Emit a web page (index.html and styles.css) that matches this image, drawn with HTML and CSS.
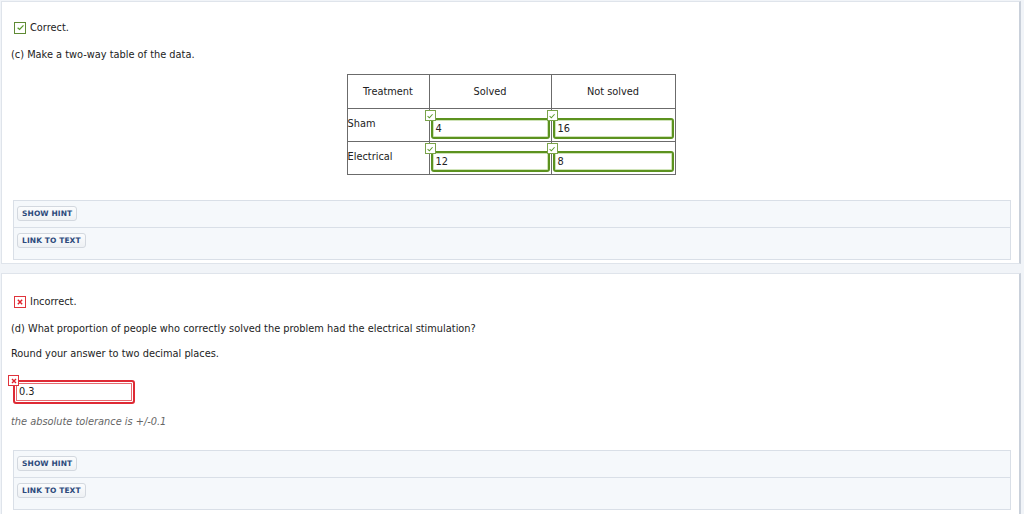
FILE: index.html
```html
<!DOCTYPE html>
<html>
<head>
<meta charset="utf-8">
<link rel="stylesheet" href="styles.css">
</head>
<body>
<div class="page">
  <div class="panel p1">
    <div class="status">
      <span class="ico ok"><svg viewBox="0 0 10 10" width="9" height="9"><path d="M1.8 5.2 L4 7.2 L8.3 2.6" fill="none" stroke="#5a9a2a" stroke-width="1.4"/></svg></span>
      <span>Correct.</span>
    </div>
    <p class="q q1">(c) Make a two-way table of the data.</p>
    <table class="tw">
      <tr class="hd"><th class="c1">Treatment</th><th class="c2">Solved</th><th class="c3">Not solved</th></tr>
      <tr><td class="lbl">Sham</td>
        <td class="in"><div class="wrap"><span class="mini"><svg viewBox="0 0 10 10" width="8" height="8"><path d="M2 5.2 L4.2 7.2 L8.2 2.8" fill="none" stroke="#5a9a2a" stroke-width="1.3"/></svg></span><div class="field">4</div></div></td>
        <td class="in"><div class="wrap"><span class="mini"><svg viewBox="0 0 10 10" width="8" height="8"><path d="M2 5.2 L4.2 7.2 L8.2 2.8" fill="none" stroke="#5a9a2a" stroke-width="1.3"/></svg></span><div class="field">16</div></div></td></tr>
      <tr><td class="lbl">Electrical</td>
        <td class="in"><div class="wrap"><span class="mini"><svg viewBox="0 0 10 10" width="8" height="8"><path d="M2 5.2 L4.2 7.2 L8.2 2.8" fill="none" stroke="#5a9a2a" stroke-width="1.3"/></svg></span><div class="field">12</div></div></td>
        <td class="in"><div class="wrap"><span class="mini"><svg viewBox="0 0 10 10" width="8" height="8"><path d="M2 5.2 L4.2 7.2 L8.2 2.8" fill="none" stroke="#5a9a2a" stroke-width="1.3"/></svg></span><div class="field">8</div></div></td></tr>
    </table>
    <div class="hints h1">
      <div class="hrow r1"><span class="btn">SHOW HINT</span></div>
      <div class="hrow r2"><span class="btn">LINK TO TEXT</span></div>
    </div>
  </div>
  <div class="panel p2">
    <div class="status">
      <span class="ico bad"><svg viewBox="0 0 10 10" width="8" height="8"><path d="M2.3 2.3 L7.7 7.7 M7.7 2.3 L2.3 7.7" stroke="#e0202a" stroke-width="1.8"/></svg></span>
      <span>Incorrect.</span>
    </div>
    <p class="q q2">(d) What proportion of people who correctly solved the problem had the electrical stimulation?</p>
    <p class="q q3">Round your answer to two decimal places.</p>
    <div class="ans">
      <span class="xmini"><svg viewBox="0 0 10 10" width="8" height="8"><path d="M2.5 2.5 L7.5 7.5 M7.5 2.5 L2.5 7.5" stroke="#e0202a" stroke-width="1.7"/></svg></span>
      <div class="rfield">0.3</div>
    </div>
    <p class="tol">the absolute tolerance is +/-0.1</p>
    <div class="hints h2">
      <div class="hrow r1"><span class="btn">SHOW HINT</span></div>
      <div class="hrow r2"><span class="btn">LINK TO TEXT</span></div>
    </div>
  </div>
</div>
</body>
</html>
```
FILE: styles.css
```css
html, body { margin: 0; padding: 0; }
body {
  background: #f1f4f8;
  font-family: "DejaVu Sans", Verdana, sans-serif;
  font-size: 9.8px;
  color: #222;
  width: 1024px;
  height: 514px;
  overflow: hidden;
}
.page { padding: 1px 3px 0 1px; }
.panel {
  background: #fff;
  border: 1px solid #dfe4eb;
  border-right: 2px solid #c9d0da;
  padding: 0 0 4px 9px;
}
.p1 { height: 257px; margin-bottom: 9px; }
.p2 { height: 240px; }
.status {
  display: flex;
  align-items: center;
  gap: 4px;
  margin: 19px 0 0 3px;
  height: 13px;
  line-height: 13px;
}
.p2 .status { margin-top: 21px; }
.ico {
  width: 10px; height: 10px;
  display: flex; align-items: center; justify-content: center;
  background: #fff;
}
.ok { border: 1.5px solid #5f8a34; }
.bad { border: 1.5px solid #e0343c; }
.q { margin: 0; line-height: 14px; }
.q1 { margin-top: 14px; }
.q2 { margin-top: 14px; }
.q3 { margin-top: 11px; }
.tw {
  border-collapse: collapse;
  margin: 12px auto 0;
  position: relative;
  left: -4px;
}
.tw th, .tw td { border: 1px solid #6b6b6b; padding: 0; }
.tw th { font-weight: normal; height: 33px; text-align: center; }
.c1 { width: 81px; }
.c2 { width: 121px; }
.c3 { width: 123px; }
.lbl { vertical-align: middle; padding-bottom: 3px !important; }
.in { vertical-align: top; }
.wrap { position: relative; padding: 9px 1px 2px 1px; }
.mini {
  position: absolute;
  top: 1px; left: -5px;
  width: 9px; height: 9px;
  border: 1px solid #7aa34a;
  background: #fff;
  display: flex; align-items: center; justify-content: center;
  z-index: 2;
}
.field {
  height: 17px;
  line-height: 17px;
  border: 2px solid #5c921f;
  border-radius: 3px;
  box-shadow: inset 0 0 0 1px #cfe3b8;
  padding-left: 3px;
}
.hints {
  margin: 25px 8px 0 2px;
  background: #f5f8fb;
  border: 1px solid #d9dfe7;
}
.h2 { margin-top: 21px; }
.hrow { padding: 5px 3px 0; }
.r1 { height: 21px; border-bottom: 1px solid #d9dfe7; }
.r2 { height: 26px; }
.btn {
  display: inline-block;
  font-size: 7.5px;
  font-weight: bold;
  color: #2c4a7c;
  line-height: 13px;
  padding: 0 4px;
  border: 1px solid #d3d8df;
  border-radius: 3px;
  background: linear-gradient(#fbfcfd, #eef1f4);
  letter-spacing: 0.1px;
}
.ans { position: relative; margin-top: 19px; margin-left: 2px; width: 122px; }
.xmini {
  position: absolute;
  top: -5px; left: -5px;
  width: 9px; height: 9px;
  border: 1px solid #e0343c;
  background: #fff;
  display: flex; align-items: center; justify-content: center;
  z-index: 2;
}
.rfield {
  height: 20px;
  line-height: 20px;
  border: 2px solid #de2a34;
  border-radius: 3px;
  box-shadow: inset 0 0 0 1px #fff, inset 0 0 0 2px #e66a70;
  padding-left: 4px;
}
.tol {
  margin: 11px 0 0;
  line-height: 14px;
  font-style: italic;
  color: #666;
}
```
